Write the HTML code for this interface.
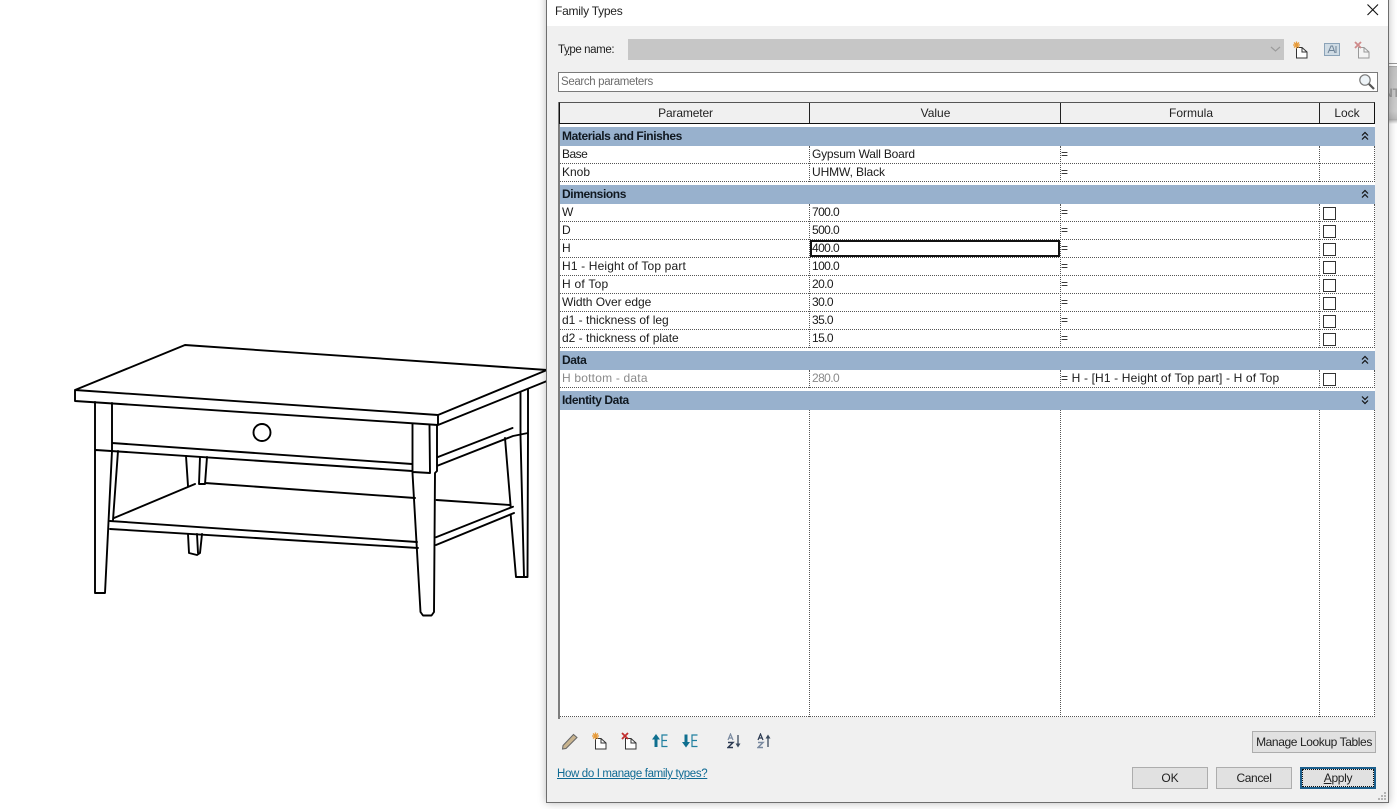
<!DOCTYPE html>
<html><head><meta charset="utf-8"><title>Family Types</title>
<style>
html,body{margin:0;padding:0;background:#fff;width:1397px;height:809px;overflow:hidden}
body{position:relative;font-family:"Liberation Sans",sans-serif;font-size:12px;color:#1a1a1a}
.a{position:absolute}
.t{position:absolute;white-space:nowrap;line-height:16px;height:16px}
.n{letter-spacing:-.6px}
.w{letter-spacing:.15px}
.band{position:absolute;left:560px;width:815px;height:19px;background:#98b1cd}
.band b{position:absolute;left:2px;top:1px;line-height:16px;color:#101820;font-size:12px;letter-spacing:-.4px}
.band svg{position:absolute;left:801px;top:4px}
.h{position:absolute;left:560px;width:815px;height:0;border-top:1px dotted #555}
.v{position:absolute;width:0;border-left:1px dotted #555}
.cb{position:absolute;left:1323px;width:11px;height:11px;border:1px solid #333;background:#fff}
.btn{position:absolute;background:#e1e1e1;border:1px solid #adadad;text-align:center;box-sizing:border-box;line-height:20px;color:#222;white-space:nowrap}
.hc{position:absolute;top:103px;height:20px;line-height:20px;text-align:center;color:#222}
</style></head><body>

<svg class="a" style="left:0;top:0" width="547" height="809" fill="none" stroke="#000" stroke-width="1.900" stroke-linecap="round" stroke-linejoin="round">
<path d="M185 345L547 370M75 390L185 345M75 390L438 415L547 370M75 390V401L438 425L547 381M438 415V425"/>
<path d="M95 402V593H105L112 451V403M96 450L412 471M112 443L412 464"/>
<path d="M118 451L113 520M110 521L417 542M110 529L418 548M114 518L195 484"/>
<circle cx="262" cy="432.500" r="8.500"/>
<path d="M186 456L188 486M200 457L199 484H205L207 457M205 483L415 498"/>
<path d="M188 534L189 553L197 555L200 553L202 534M197 534L198 553"/>
<path d="M412.500 424V473L420.500 612L423 615.500H431.500L434 612L435 473L437 471V425M429.500 425L430 473M413 472L430 473"/>
<path d="M438 457L512.500 428M438 465.500L513 436L528 433M520.500 392V436L524 577M528 389V433L527.500 577H516L510.700 515M505 438L510.700 507"/>
<path d="M436.500 500L510 505M436 537.300L513 506.700M436 545L514 513"/>
</svg>

<!-- right background fragment -->
<div class="a" style="left:1389px;top:67px;width:8px;height:52px;background:linear-gradient(#c4c4c4,#cfcfcf 85%,#bbb)"></div>
<div class="a" style="left:1389px;top:119px;width:8px;height:5px;background:linear-gradient(#aaa,#fff)"></div>
<div class="a" style="left:1389px;top:63px;width:8px;height:2px;border-top:1px solid #999;border-bottom:1px solid #aaa"></div>
<div class="t" style="left:1384px;top:85px;color:#999;font-weight:bold;font-size:12px">NT</div>

<!-- dialog -->
<div class="a" style="left:546px;top:-20px;width:843px;height:823px;box-sizing:border-box;background:#f0f0f0;border:1px solid #6e6e6e;box-shadow:0 0 8px rgba(0,0,0,.28)"></div>
<div class="a" style="left:547px;top:0;width:841px;height:26px;background:#fff"></div>
<div class="t" style="left:555px;top:3px;font-size:12px;color:#222;letter-spacing:-.25px">Family Types</div>
<svg class="a" style="left:1366px;top:3px" width="14" height="14" stroke="#111" stroke-width="1.100" fill="none"><path d="M1.500 1.500L12 12M12 1.500L1.500 12"/></svg>

<div class="t" style="left:558px;top:42px;color:#222;font-size:11.500px;letter-spacing:-.4px">T<u>y</u>pe name:</div>
<div class="a" style="left:628px;top:39px;width:656px;height:21px;background:#c6c6c6"></div>
<svg class="a" style="left:1270px;top:46px" width="11" height="7" fill="none" stroke="#9b9b9b" stroke-width="1.200"><path d="M1 1L5.500 5L10 1"/></svg>

<svg class="a" style="left:1292px;top:41px" width="20" height="18"><path d="M4.500 6.500H10L15 11V17H4.500Z" fill="#fff" stroke="#333"/><path d="M10 6.500V11H15" fill="none" stroke="#333"/><path d="M1 4H8M4.500 .5V7.500M2 1.500L7 6.500M7 1.500L2 6.500" stroke="#e79b3a" stroke-width="1.300"/></svg>
<svg class="a" style="left:1324px;top:43px" width="16" height="13"><rect x=".5" y=".5" width="15" height="12" fill="#cfdbe4" stroke="#8ba3b8"/><path d="M4 10L7 3H8.500L11 10M5 7.500H10M12 3V10" stroke="#6f8498" fill="none"/></svg>
<svg class="a" style="left:1354px;top:41px" width="20" height="18"><path d="M4.500 6.500H10L15 11V17H4.500Z" fill="#f4f4f4" stroke="#999"/><path d="M10 6.500V11H15" fill="none" stroke="#999"/><path d="M1 1L7 7M7 1L1 7" stroke="#cf8a8a" stroke-width="1.800"/></svg>

<div class="a" style="left:558px;top:72px;width:820px;height:20px;box-sizing:border-box;background:#fff;border:1px solid #7a7a7a"></div>
<div class="t" style="left:561px;top:74px;color:#6d6d6d;letter-spacing:-.35px;font-size:11.500px">Search parameters</div>
<svg class="a" style="left:1358px;top:73px" width="18" height="18" fill="none"><circle cx="7" cy="7" r="5.200" fill="#eef4f8" stroke="#777" stroke-width="1.200"/><path d="M11 11L16 16" stroke="#555" stroke-width="2.200"/></svg>

<!-- grid -->
<div class="a" style="left:560px;top:124px;width:815px;height:593px;background:#fff"></div>
<div class="a" style="left:558px;top:102px;width:2px;height:617px;background:#7d7d7d"></div>
<div class="a" style="left:559px;top:102px;width:816px;height:22px;box-sizing:border-box;border:1px solid #111;border-top:1px solid #555;background:#f0f0f0"></div>
<div class="a" style="left:809px;top:103px;width:1px;height:20px;background:#222"></div>
<div class="a" style="left:1060px;top:103px;width:1px;height:20px;background:#222"></div>
<div class="a" style="left:1319px;top:103px;width:1px;height:20px;background:#222"></div>
<div class="hc" style="left:561px;width:249px;letter-spacing:-.15px">Parameter</div>
<div class="hc" style="left:810px;width:251px">Value</div>
<div class="hc" style="left:1062px;width:258px">Formula</div>
<div class="hc" style="left:1320px;width:54px">Lock</div>

<!-- vertical dotted lines -->
<div class="v" style="left:809px;top:146px;height:36px"></div><div class="v" style="left:1060px;top:146px;height:36px"></div><div class="v" style="left:1319px;top:146px;height:36px"></div><div class="v" style="left:1374px;top:146px;height:36px"></div>
<div class="v" style="left:809px;top:204px;height:144px"></div><div class="v" style="left:1060px;top:204px;height:144px"></div><div class="v" style="left:1319px;top:204px;height:144px"></div><div class="v" style="left:1374px;top:204px;height:144px"></div>
<div class="v" style="left:809px;top:370px;height:18px"></div><div class="v" style="left:1060px;top:370px;height:18px"></div><div class="v" style="left:1319px;top:370px;height:18px"></div><div class="v" style="left:1374px;top:370px;height:18px"></div>
<div class="v" style="left:809px;top:410px;height:307px"></div><div class="v" style="left:1060px;top:410px;height:307px"></div><div class="v" style="left:1319px;top:410px;height:307px"></div><div class="v" style="left:1374px;top:410px;height:307px"></div>

<!-- horizontal dotted lines -->
<div class="h" style="top:163px"></div><div class="h" style="top:181px"></div>
<div class="h" style="top:221px"></div><div class="h" style="top:239px"></div><div class="h" style="top:257px"></div><div class="h" style="top:275px"></div><div class="h" style="top:293px"></div><div class="h" style="top:311px"></div><div class="h" style="top:329px"></div><div class="h" style="top:347px"></div>
<div class="h" style="top:387px"></div>
<div class="h" style="top:716px"></div>

<!-- bands -->
<div class="band" style="top:127px"><b>Materials and Finishes</b><svg width="8" height="10" fill="none" stroke="#111" stroke-width="1.200"><path d="M1 4.500L4 1.500L7 4.500M1 8.500L4 5.500L7 8.500"/></svg></div>
<div class="band" style="top:185px"><b>Dimensions</b><svg width="8" height="10" fill="none" stroke="#111" stroke-width="1.200"><path d="M1 4.500L4 1.500L7 4.500M1 8.500L4 5.500L7 8.500"/></svg></div>
<div class="band" style="top:351px"><b>Data</b><svg width="8" height="10" fill="none" stroke="#111" stroke-width="1.200"><path d="M1 4.500L4 1.500L7 4.500M1 8.500L4 5.500L7 8.500"/></svg></div>
<div class="band" style="top:391px"><b>Identity Data</b><svg width="8" height="10" fill="none" stroke="#111" stroke-width="1.200"><path d="M1 1.500L4 4.500L7 1.500M1 5.500L4 8.500L7 5.500"/></svg></div>

<!-- rows -->
<div class="t" style="left:562px;top:146px;letter-spacing:-.5px">Base</div><div class="t" style="left:812px;top:146px;letter-spacing:-.2px">Gypsum Wall Board</div><div class="t" style="left:1061px;top:146px">=</div>
<div class="t" style="left:562px;top:164px">Knob</div><div class="t" style="left:812px;top:164px;letter-spacing:-.1px">UHMW, Black</div><div class="t" style="left:1061px;top:164px">=</div>

<div class="t" style="left:562px;top:204px">W</div><div class="t n" style="left:812px;top:204px">700.0</div><div class="t" style="left:1061px;top:204px">=</div><div class="cb" style="top:207px"></div>
<div class="t" style="left:562px;top:222px">D</div><div class="t n" style="left:812px;top:222px">500.0</div><div class="t" style="left:1061px;top:222px">=</div><div class="cb" style="top:225px"></div>
<div class="t" style="left:562px;top:240px">H</div><div class="a" style="left:810px;top:240px;width:250px;height:17px;box-sizing:border-box;border:2px solid #111;background:#fff"></div><div class="t n" style="left:812px;top:240px">400.0</div><div class="t" style="left:1061px;top:240px">=</div><div class="cb" style="top:243px"></div>
<div class="t w" style="left:562px;top:258px">H1 - Height of Top part</div><div class="t n" style="left:812px;top:258px">100.0</div><div class="t" style="left:1061px;top:258px">=</div><div class="cb" style="top:261px"></div>
<div class="t" style="left:562px;top:276px;letter-spacing:.25px">H of Top</div><div class="t n" style="left:812px;top:276px">20.0</div><div class="t" style="left:1061px;top:276px">=</div><div class="cb" style="top:279px"></div>
<div class="t" style="left:562px;top:294px;letter-spacing:-.05px">Width Over edge</div><div class="t n" style="left:812px;top:294px">30.0</div><div class="t" style="left:1061px;top:294px">=</div><div class="cb" style="top:297px"></div>
<div class="t" style="left:562px;top:312px">d1 - thickness of leg</div><div class="t n" style="left:812px;top:312px">35.0</div><div class="t" style="left:1061px;top:312px">=</div><div class="cb" style="top:315px"></div>
<div class="t" style="left:562px;top:330px">d2 - thickness of plate</div><div class="t n" style="left:812px;top:330px">15.0</div><div class="t" style="left:1061px;top:330px">=</div><div class="cb" style="top:333px"></div>

<div class="t" style="left:562px;top:370px;color:#8a8a8a;letter-spacing:.2px">H bottom - data</div><div class="t n" style="left:812px;top:370px;color:#8a8a8a">280.0</div><div class="t w" style="left:1061px;top:370px">= H - [H1 - Height of Top part] - H of Top</div><div class="cb" style="top:373px"></div>

<!-- bottom toolbar -->
<svg class="a" style="left:561px;top:732px" width="18" height="18"><path d="M2 13.500L12.500 2.500L16 5.500L5 16.500L1.500 17Z" fill="#c9b48f" stroke="#666"/></svg>
<svg class="a" style="left:591px;top:732px" width="20" height="18"><path d="M4.500 6.500H10L15 11V17H4.500Z" fill="#fff" stroke="#333"/><path d="M10 6.500V11H15" fill="none" stroke="#333"/><path d="M1 4H8M4.500 .5V7.500M2 1.500L7 6.500M7 1.500L2 6.500" stroke="#e79b3a" stroke-width="1.300"/></svg>
<svg class="a" style="left:621px;top:732px" width="20" height="18"><path d="M4.500 6.500H10L15 11V17H4.500Z" fill="#fff" stroke="#333"/><path d="M10 6.500V11H15" fill="none" stroke="#333"/><path d="M1 1L7 7M7 1L1 7" stroke="#c22f2f" stroke-width="1.800"/></svg>
<svg class="a" style="left:652px;top:733px" width="17" height="16"><path d="M4 1L8 6.500H5.500V14H2.500V6.500H0Z" fill="#0f6f8f"/><path d="M15.500 2H10V13.500H15.500M10 7.500H15" fill="none" stroke="#1f7f9f" stroke-width="1.200"/></svg>
<svg class="a" style="left:682px;top:733px" width="17" height="16"><path d="M4 14.500L8 9H5.500V1.500H2.500V9H0Z" fill="#0f6f8f"/><path d="M15.500 2H10V13.500H15.500M10 7.500H15" fill="none" stroke="#1f7f9f" stroke-width="1.200"/></svg>
<svg class="a" style="left:727px;top:733px" width="14" height="16"><path d="M1 7L3.500 1L6 7M2 5H5" fill="none" stroke="#7a8aa0" stroke-width="1.200"/><path d="M1 9.500H6L1 14.500H6" fill="none" stroke="#2c3a52" stroke-width="1.500"/><path d="M11 2V12" stroke="#3a4a5e" stroke-width="1.300"/><path d="M8.500 10.500H13.500L11 14.500Z" fill="#3a4a5e"/></svg>
<svg class="a" style="left:757px;top:733px" width="14" height="16"><path d="M1 7L3.500 1L6 7M2 5H5" fill="none" stroke="#2c3a52" stroke-width="1.200"/><path d="M1 9.500H6L1 14.500H6" fill="none" stroke="#7a8aa0" stroke-width="1.500"/><path d="M11 4V14" stroke="#3a4a5e" stroke-width="1.300"/><path d="M8.500 5.500H13.500L11 1.500Z" fill="#3a4a5e"/></svg>

<div class="t" style="left:557px;top:766px;color:#0f6a94;text-decoration:underline;font-size:11.500px;letter-spacing:-.35px">How do I manage family types?</div>

<div class="btn" style="left:1252px;top:731px;width:124px;height:22px;letter-spacing:-.4px">Manage Lookup Tables</div>
<div class="btn" style="left:1132px;top:767px;width:76px;height:22px">OK</div>
<div class="btn" style="left:1216px;top:767px;width:76px;height:22px;letter-spacing:-.4px">Cancel</div>
<div class="btn" style="left:1300px;top:767px;width:76px;height:22px;border:2px solid #1c5f8c;line-height:18px;outline:1px dotted #111;outline-offset:-3px;letter-spacing:-.3px"><u>A</u>pply</div>

<svg class="a" style="left:1378px;top:791px" width="9" height="10" fill="#b5b5b5"><rect x="6" y="1" width="2" height="2"/><rect x="3" y="4" width="2" height="2"/><rect x="6" y="4" width="2" height="2"/><rect x="0" y="7" width="2" height="2"/><rect x="3" y="7" width="2" height="2"/><rect x="6" y="7" width="2" height="2"/></svg>
</body></html>
